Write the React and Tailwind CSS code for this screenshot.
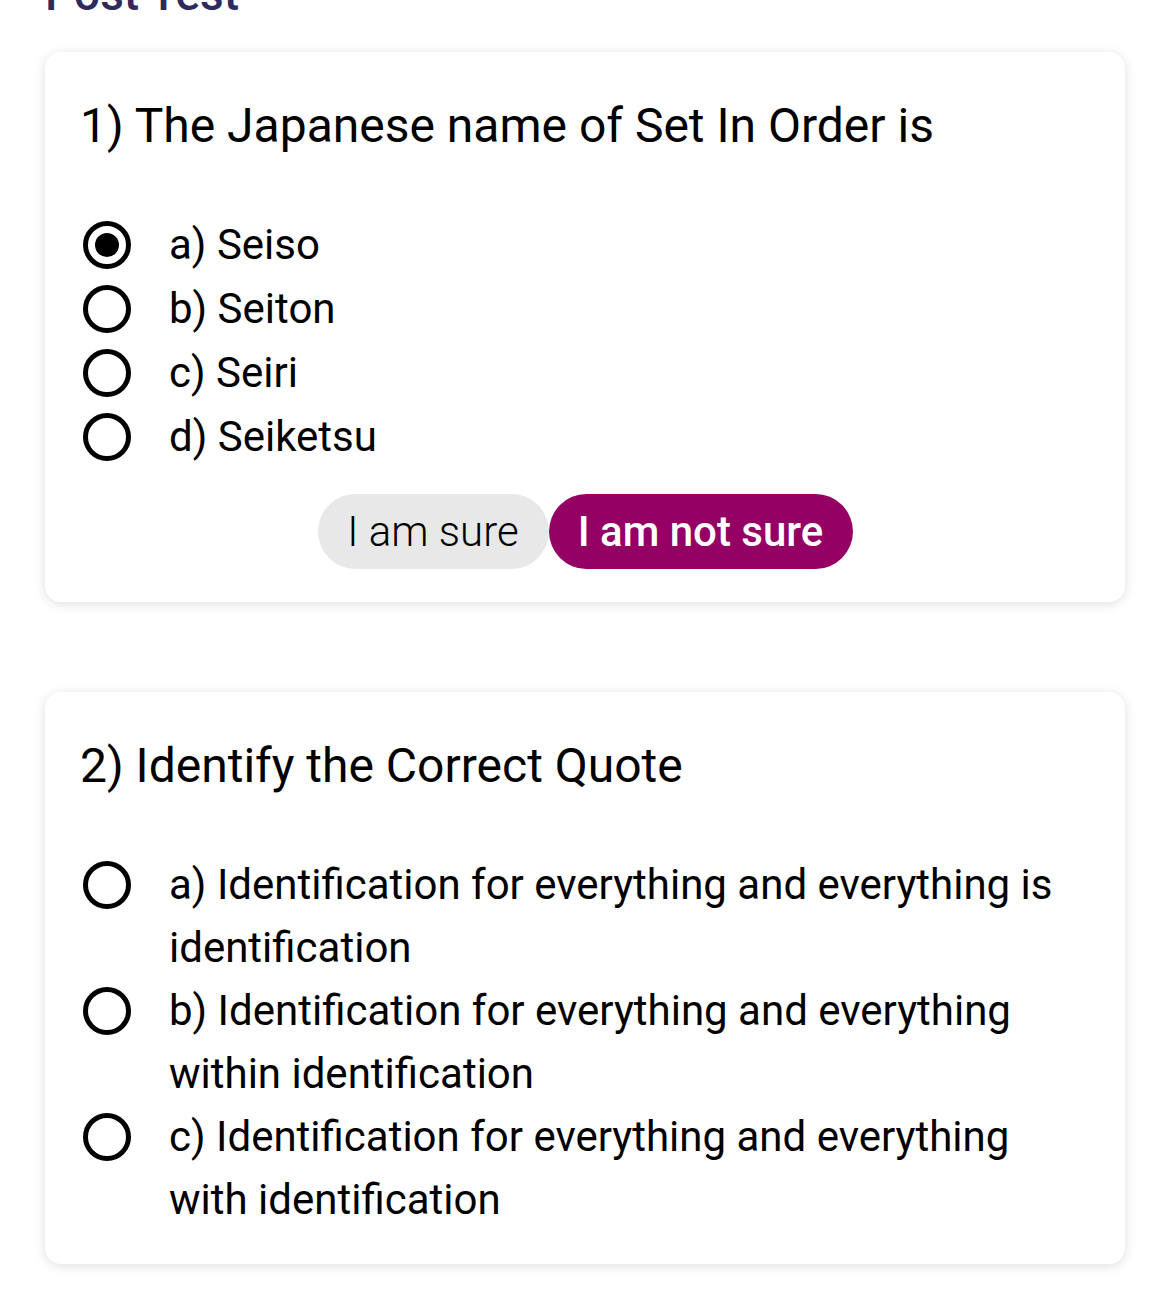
import React from 'react'

const questions = [
  {
    title: "1) The Japanese name of Set In Order is",
    options: ["a) Seiso", "b) Seiton", "c) Seiri", "d) Seiketsu"],
    selected: 0,
    rowLeading: "leading-[64px]",
    rowHeight: "h-[64px]",
    showConfidence: true
  },
  {
    title: "2) Identify the Correct Quote",
    options: [
      "a) Identification for everything and everything is identification",
      "b) Identification for everything and everything within identification",
      "c) Identification for everything and everything with identification"
    ],
    selected: -1,
    rowLeading: "leading-[63px]",
    rowHeight: "h-[63px]",
    showConfidence: false
  }
]

const Radio = ({ checked, height }) => (
  <div className={`${height} flex items-center shrink-0`}>
    <div className="ml-[3px] w-[48px] h-[48px] rounded-full border-[5px] border-black flex items-center justify-center">
      {checked && <div className="w-[24px] h-[24px] rounded-full bg-black" />}
    </div>
  </div>
)

const QuestionCard = ({ data }) => {
  return (
    <div className="bg-white rounded-[16px] shadow-[0_2px_12px_rgba(0,0,0,0.13)] px-[35px] pt-[46px] pb-[33px]">
      {/* Question */}
      <p className="text-[48px] leading-[56px] text-black">{data.title}</p>
      {/* Options */}
      <div className="mt-[59px] flex flex-col pr-[10px]">
        {data.options.map((opt, i) => (
          <div key={opt} className="flex items-start gap-[38px]">
            <Radio checked={i === data.selected} height={data.rowHeight} />
            <p className={`text-[42px] ${data.rowLeading} text-black`}>{opt}</p>
          </div>
        ))}
      </div>
      {/* Confidence buttons */}
      {data.showConfidence && (
        <div className="mt-[25px] flex justify-center">
          <button className="h-[75px] w-[231px] rounded-full bg-[#e8e8e8] text-[42px] font-light text-black">I am sure</button>
          <button className="h-[75px] w-[304px] rounded-full bg-[#950064] text-[42px] font-medium text-white">I am not sure</button>
        </div>
      )}
    </div>
  )
}

const App = () => {
  return (
    <div className="min-h-[1312px] bg-white overflow-hidden font-['Roboto',sans-serif]">
      <h1 className="mt-[-29px] ml-[45px] text-[46px] leading-none font-medium text-[#2d2a5c]">Post Test</h1>
      <div className="mt-[35px] mx-[45px] flex flex-col gap-[90px]">
        {questions.map((q) => (
          <QuestionCard key={q.title} data={q} />
        ))}
      </div>
    </div>
  )
}

export default App
